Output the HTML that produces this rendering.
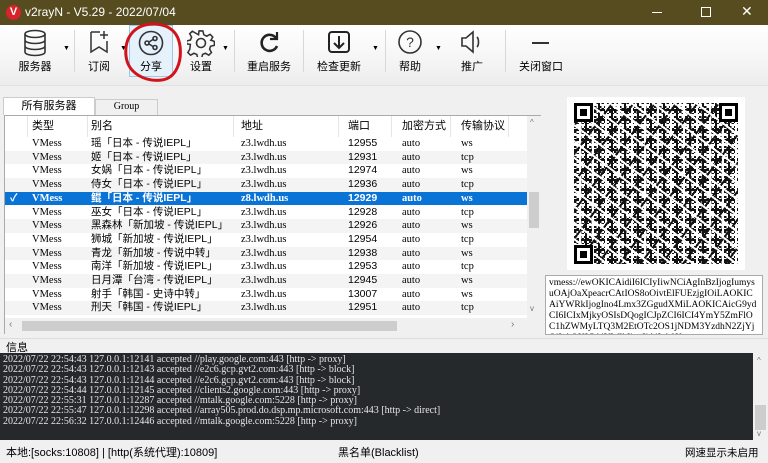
<!DOCTYPE html>
<html><head><meta charset="utf-8"><style>
*{margin:0;padding:0;box-sizing:border-box}
body{width:768px;height:463px;overflow:hidden;background:#f0f0f0;font-family:"Liberation Sans","Noto Sans CJK SC",sans-serif;font-size:11px;color:#000;position:relative}
.abs{position:absolute}
#title{left:0;top:0;width:768px;height:25px;background:#574c1f;color:#fff;font-size:12px}
#tb{left:0;top:25px;width:768px;height:60px;background:linear-gradient(#fff,#f3f3f3 70%,#ececec)}
.btn{position:absolute;top:0;text-align:center;font-size:11px}
.btn svg{display:block;margin:4px auto 0}
.lbl{position:absolute;top:33px;width:100%;text-align:center}
.sep{position:absolute;top:5px;width:1px;height:42px;background:#d8d8d8}
.dd{position:absolute;top:20px;font-size:7px}
.mono{font-family:"Liberation Serif","Noto Serif CJK SC",serif}
#list{left:4px;top:115px;width:537px;height:219px;background:#fff;border:1px solid #aaa}
.row{position:absolute;left:0;width:522px;height:13.7px;font-size:10.5px;line-height:13.7px}
.row span{position:absolute;top:0;white-space:nowrap}
.sel{background:#0a74d6!important;color:#fff;font-weight:bold}
#log{left:0;top:353px;width:753px;height:87px;background:#26292b;color:#e6e6e6;font-family:"Liberation Serif","Noto Serif CJK SC",serif;font-size:10px;line-height:10.3px;padding:2px 0 0 3px;white-space:nowrap;overflow:hidden}
.fp{position:absolute;width:19px;height:19px;border:3px solid #000;background:#fff}
.fp:after{content:"";position:absolute;left:3px;top:3px;width:7px;height:7px;background:#000}
</style></head><body>
<div id="title" class="abs">
 <div class="abs" style="left:6px;top:5px;width:15px;height:15px;border-radius:50%;background:#d8232a;color:#fff;font-weight:bold;font-size:11px;line-height:15px;text-align:center">V</div>
 <div class="abs" style="left:25px;top:5px">v2rayN - V5.29 - 2022/07/04</div>
 <div class="abs" style="left:652px;top:12px;width:10px;height:1px;background:#fff"></div>
 <div class="abs" style="left:701px;top:7px;width:10px;height:10px;border:1px solid #fff"></div>
 <div class="abs" style="left:741px;top:3px;font-size:14px">✕</div>
</div>
<div id="tb" class="abs">
 <div class="btn" style="left:12px;width:46px"><svg width="26" height="28" viewBox="0 0 26 28" fill="none" stroke="#333" stroke-width="1.6"><ellipse cx="13" cy="5" rx="10" ry="3.5"/><path d="M3 5v18c0 2 4.5 3.5 10 3.5s10-1.5 10-3.5V5M3 11c0 2 4.5 3.5 10 3.5s10-1.5 10-3.5M3 17c0 2 4.5 3.5 10 3.5s10-1.5 10-3.5"/></svg><div class="lbl">服务器</div></div>
 <div class="dd" style="left:63px">▼</div>
 <div class="sep" style="left:74px"></div>
 <div class="btn" style="left:80px;width:38px"><svg width="22" height="26" viewBox="0 0 22 26" fill="none" stroke="#333" stroke-width="1.5"><path d="M3 3h9M3 3v20l8-5 8 5V12"/><path d="M16 2v8M12 6h8"/></svg><div class="lbl">订阅</div></div>
 <div class="dd" style="left:120px">▼</div>
 <div class="btn" style="left:129px;width:44px;height:52px;border:1px solid #9cc7e8;background:#e5f1fb"><svg width="26" height="26" viewBox="0 0 26 26" fill="none" stroke="#333" stroke-width="1.6"><circle cx="13" cy="13" r="11.5"/><circle cx="9" cy="13" r="2"/><circle cx="17" cy="8.5" r="2"/><circle cx="17" cy="17.5" r="2"/><path d="M11 12l4-2.5M11 14l4 2.5"/></svg><div class="lbl" style="top:32px">分享</div></div>
 <svg class="abs" style="left:118px;top:-4px" width="68" height="64" viewBox="0 0 68 64" fill="none" stroke="#d0141a" stroke-width="3"><path d="M38 3C18 2 6 15 8 35c2 18 20 26 36 24 14-2 20-18 18-34C60 10 50 4 38 3z"/></svg>
 <div class="btn" style="left:184px;width:34px"><svg width="28" height="28" viewBox="0 0 28 28" fill="none" stroke="#333" stroke-width="1.6"><circle cx="14" cy="14" r="4.5"/><path d="M12 2h4l1 4 3 1.5 3.5-2 2.8 2.8-2 3.5L25.5 12l2.5 1v4l-4 1-1 3 2 3.5-2.8 2.8-3.5-2-3 1.2-1 4h-4l-1-4-3-1.2-3.5 2-2.8-2.8 2-3.5L3 16l-4-.5v-3l4-1 1.3-3-2-3.5L5 2.3l3.5 2L11.5 6z" transform="translate(0.5 0) scale(.96)"/></svg><div class="lbl">设置</div></div>
 <div class="dd" style="left:222px">▼</div>
 <div class="sep" style="left:234px"></div>
 <div class="btn" style="left:242px;width:54px"><svg width="24" height="28" viewBox="0 0 24 28" fill="none" stroke="#222" stroke-width="2.6"><path d="M19 9a8 8 0 1 0 1 8"/><path d="M20 3v7h-7" stroke-width="2.2"/></svg><div class="lbl">重启服务</div></div>
 <div class="sep" style="left:303px"></div>
 <div class="btn" style="left:312px;width:54px"><svg width="26" height="28" viewBox="0 0 26 28" fill="none" stroke="#222" stroke-width="2"><rect x="3" y="3" width="20" height="20" rx="3"/><path d="M13 7v12M8 14l5 5 5-5"/></svg><div class="lbl">检查更新</div></div>
 <div class="dd" style="left:372px">▼</div>
 <div class="sep" style="left:385px"></div>
 <div class="btn" style="left:393px;width:34px"><svg width="26" height="28" viewBox="0 0 26 28" fill="none" stroke="#333" stroke-width="1.6"><circle cx="13" cy="13" r="11"/><text x="13" y="18" font-size="14" text-anchor="middle" fill="#333" stroke="none" font-family="Liberation Sans">?</text></svg><div class="lbl">帮助</div></div>
 <div class="dd" style="left:435px">▼</div>
 <div class="btn" style="left:452px;width:40px"><svg width="26" height="28" viewBox="0 0 26 28" fill="none" stroke="#333" stroke-width="1.6"><path d="M3 9h4l7-6v20l-7-6H3z"/><path d="M18 8c2 2 2 8 0 10"/></svg><div class="lbl">推广</div></div>
 <div class="sep" style="left:505px"></div>
 <div class="btn" style="left:512px;width:58px"><div class="abs" style="left:20px;top:17px;width:17px;height:1.5px;background:#333"></div><div class="lbl">关闭窗口</div></div>
</div>
<div class="abs" style="left:0;top:85px;width:768px;height:1px;background:#e2e2e2"></div>
<div class="abs" style="left:3px;top:97px;width:92px;height:18px;background:#fff;border:1px solid #ccc;border-bottom:none;text-align:center;line-height:16px">所有服务器</div>
<div class="abs mono" style="left:95px;top:99px;width:63px;height:16px;background:#f0f0f0;border:1px solid #ccc;border-bottom:none;text-align:center;line-height:14px;font-size:10px">Group</div>
<div id="list" class="abs">
 <div class="abs" style="left:0;top:0;width:522px;height:21px;font-size:11px;line-height:21px">
  <span class="abs" style="left:27px">类型</span><span class="abs" style="left:86px">别名</span><span class="abs" style="left:236px">地址</span><span class="abs" style="left:343px">端口</span><span class="abs" style="left:397px">加密方式</span><span class="abs" style="left:456px">传输协议</span>
  <div class="abs" style="left:22px;top:0;width:1px;height:21px;background:#e5e5e5"></div><div class="abs" style="left:82px;top:0;width:1px;height:21px;background:#e5e5e5"></div><div class="abs" style="left:228px;top:0;width:1px;height:21px;background:#e5e5e5"></div><div class="abs" style="left:333px;top:0;width:1px;height:21px;background:#e5e5e5"></div><div class="abs" style="left:386px;top:0;width:1px;height:21px;background:#e5e5e5"></div><div class="abs" style="left:445px;top:0;width:1px;height:21px;background:#e5e5e5"></div><div class="abs" style="left:503px;top:0;width:1px;height:21px;background:#e5e5e5"></div>
 </div>
 <div class="abs" style="left:0;top:21px;width:522px;height:181px;overflow:hidden">
 <div class="row" style="top:0"><span class="mono" style="left:27px">VMess</span><span style="left:86px">瑶「日本 - 传说IEPL」</span><span class="mono" style="left:236px">z3.lwdh.us</span><span style="left:343px">12955</span><span class="mono" style="left:397px">auto</span><span class="mono" style="left:456px">ws</span></div>
 <div class="row" style="top:13.7px;background:#f4f4f4"><span class="mono" style="left:27px">VMess</span><span style="left:86px">姬「日本 - 传说IEPL」</span><span class="mono" style="left:236px">z3.lwdh.us</span><span style="left:343px">12931</span><span class="mono" style="left:397px">auto</span><span class="mono" style="left:456px">tcp</span></div>
 <div class="row" style="top:27.4px"><span class="mono" style="left:27px">VMess</span><span style="left:86px">女娲「日本 - 传说IEPL」</span><span class="mono" style="left:236px">z3.lwdh.us</span><span style="left:343px">12974</span><span class="mono" style="left:397px">auto</span><span class="mono" style="left:456px">ws</span></div>
 <div class="row" style="top:41.1px;background:#f4f4f4"><span class="mono" style="left:27px">VMess</span><span style="left:86px">侍女「日本 - 传说IEPL」</span><span class="mono" style="left:236px">z3.lwdh.us</span><span style="left:343px">12936</span><span class="mono" style="left:397px">auto</span><span class="mono" style="left:456px">tcp</span></div>
 <div class="row sel" style="top:54.8px;width:522px"><span style="left:5px">✓</span><span class="mono" style="left:27px">VMess</span><span style="left:86px">鲲「日本 - 传说IEPL」</span><span class="mono" style="left:236px">z8.lwdh.us</span><span style="left:343px">12929</span><span class="mono" style="left:397px">auto</span><span class="mono" style="left:456px">ws</span></div>
 <div class="row" style="top:68.5px;background:#fff"><span class="mono" style="left:27px">VMess</span><span style="left:86px">巫女「日本 - 传说IEPL」</span><span class="mono" style="left:236px">z3.lwdh.us</span><span style="left:343px">12928</span><span class="mono" style="left:397px">auto</span><span class="mono" style="left:456px">tcp</span></div>
 <div class="row" style="top:82.2px;background:#f4f4f4"><span class="mono" style="left:27px">VMess</span><span style="left:86px">黑森林「新加坡 - 传说IEPL」</span><span class="mono" style="left:236px">z3.lwdh.us</span><span style="left:343px">12926</span><span class="mono" style="left:397px">auto</span><span class="mono" style="left:456px">ws</span></div>
 <div class="row" style="top:95.9px;background:#fff"><span class="mono" style="left:27px">VMess</span><span style="left:86px">狮城「新加坡 - 传说IEPL」</span><span class="mono" style="left:236px">z3.lwdh.us</span><span style="left:343px">12954</span><span class="mono" style="left:397px">auto</span><span class="mono" style="left:456px">tcp</span></div>
 <div class="row" style="top:109.6px;background:#f4f4f4"><span class="mono" style="left:27px">VMess</span><span style="left:86px">青龙「新加坡 - 传说中转」</span><span class="mono" style="left:236px">z3.lwdh.us</span><span style="left:343px">12938</span><span class="mono" style="left:397px">auto</span><span class="mono" style="left:456px">ws</span></div>
 <div class="row" style="top:123.3px;background:#fff"><span class="mono" style="left:27px">VMess</span><span style="left:86px">南洋「新加坡 - 传说IEPL」</span><span class="mono" style="left:236px">z3.lwdh.us</span><span style="left:343px">12953</span><span class="mono" style="left:397px">auto</span><span class="mono" style="left:456px">tcp</span></div>
 <div class="row" style="top:137px;background:#f4f4f4"><span class="mono" style="left:27px">VMess</span><span style="left:86px">日月潭「台湾 - 传说IEPL」</span><span class="mono" style="left:236px">z3.lwdh.us</span><span style="left:343px">12945</span><span class="mono" style="left:397px">auto</span><span class="mono" style="left:456px">ws</span></div>
 <div class="row" style="top:150.7px;background:#fff"><span class="mono" style="left:27px">VMess</span><span style="left:86px">射手「韩国 - 史诗中转」</span><span class="mono" style="left:236px">z3.lwdh.us</span><span style="left:343px">13007</span><span class="mono" style="left:397px">auto</span><span class="mono" style="left:456px">ws</span></div>
 <div class="row" style="top:164.4px;background:#f4f4f4"><span class="mono" style="left:27px">VMess</span><span style="left:86px">刑天「韩国 - 传说IEPL」</span><span class="mono" style="left:236px">z3.lwdh.us</span><span style="left:343px">12951</span><span class="mono" style="left:397px">auto</span><span class="mono" style="left:456px">tcp</span></div>
 </div>
 <div class="abs" style="left:522px;top:0;width:14px;height:202px;background:#f0f0f0"><div class="abs" style="left:2px;top:76px;width:10px;height:36px;background:#cdcdcd"></div><div class="abs" style="left:3px;top:2px;font-size:8px;color:#777">^</div><div class="abs" style="left:3px;top:188px;font-size:8px;color:#777">v</div></div>
 <div class="abs" style="left:0;top:202px;width:536px;height:16px;background:#f0f0f0"><div class="abs" style="left:17px;top:3px;width:375px;height:10px;background:#cdcdcd"></div><div class="abs" style="left:4px;top:1px;color:#777;font-size:10px">‹</div><div class="abs" style="left:506px;top:1px;color:#777;font-size:10px">›</div></div>
</div>
<div class="abs" style="left:567px;top:97px;width:178px;height:173px;background:#fff"></div>
<div class="abs" style="left:574px;top:103px;width:164px;height:161px;background:
 repeating-linear-gradient(37deg,transparent 0 6px,#fff 6px 8px,transparent 8px 13px),
 repeating-linear-gradient(-53deg,transparent 0 9px,#000 9px 11px,transparent 11px 17px),
 repeating-linear-gradient(90deg,transparent 0 5px,#fff 5px 7px,transparent 7px 11px,#000 11px 13px),
 repeating-linear-gradient(0deg,transparent 0 3px,#000 3px 5px,transparent 5px 8px,#fff 8px 10px),
 repeating-conic-gradient(#000 0 25%,#fff 0 50%) 0 0/5px 5px;opacity:.92"></div>
<div class="fp" style="left:574px;top:103px"></div>
<div class="fp" style="left:719px;top:103px"></div>
<div class="fp" style="left:574px;top:245px"></div>
<div class="abs mono" style="left:545px;top:275px;width:218px;height:60px;background:#fff;border:1px solid #aaa;font-size:9.5px;line-height:11px;padding:2px 3px;overflow:hidden;word-break:break-all">vmess://ewOKICAidiI6ICIyIiwNCiAgInBzIjogIumysuOAjOaXpeacrCAtIOS8oOivtElFUEzjgIOiLAOKICAiYWRkIjogIno4Lmx3ZGgudXMiLAOKICAicG9ydCI6ICIxMjkyOSIsDQogICJpZCI6ICI4YmY5ZmFlOC1hZWMyLTQ3M2EtOTc2OS1jNDM3YzdhN2ZjYjQiLAOKICAiYWlkIjogIjAiLA0K</div>
<div class="abs" style="left:0;top:338px;width:768px;height:1px;background:#ddd"></div>
<div class="abs" style="left:6px;top:339px;font-size:11px">信息</div>
<div id="log" class="abs">
2022/07/22 22:54:43 127.0.0.1:12141 accepted //play.google.com:443 [http -&gt; proxy]<br>
2022/07/22 22:54:43 127.0.0.1:12143 accepted //e2c6.gcp.gvt2.com:443 [http -&gt; block]<br>
2022/07/22 22:54:43 127.0.0.1:12144 accepted //e2c6.gcp.gvt2.com:443 [http -&gt; block]<br>
2022/07/22 22:54:44 127.0.0.1:12145 accepted //clients2.google.com:443 [http -&gt; proxy]<br>
2022/07/22 22:55:31 127.0.0.1:12287 accepted //mtalk.google.com:5228 [http -&gt; proxy]<br>
2022/07/22 22:55:47 127.0.0.1:12298 accepted //array505.prod.do.dsp.mp.microsoft.com:443 [http -&gt; direct]<br>
2022/07/22 22:56:32 127.0.0.1:12446 accepted //mtalk.google.com:5228 [http -&gt; proxy]
</div>
<div class="abs" style="left:753px;top:353px;width:15px;height:87px;background:#f0f0f0"><div class="abs" style="left:2px;top:52px;width:11px;height:25px;background:#cdcdcd"></div><div class="abs" style="left:4px;top:3px;font-size:8px;color:#777">^</div><div class="abs" style="left:4px;top:76px;font-size:8px;color:#777">v</div></div>
<div class="abs" style="left:0;top:443px;width:768px;height:20px;background:#f0f0f0;line-height:20px;font-size:11px">
 <span class="abs" style="left:6px">本地:[socks:10808] | [http(系统代理):10809]</span>
 <span class="abs" style="left:338px">黑名单(Blacklist)</span>
 <span class="abs" style="left:685px;font-size:10.5px">网速显示未启用</span>
</div>
</body></html>
